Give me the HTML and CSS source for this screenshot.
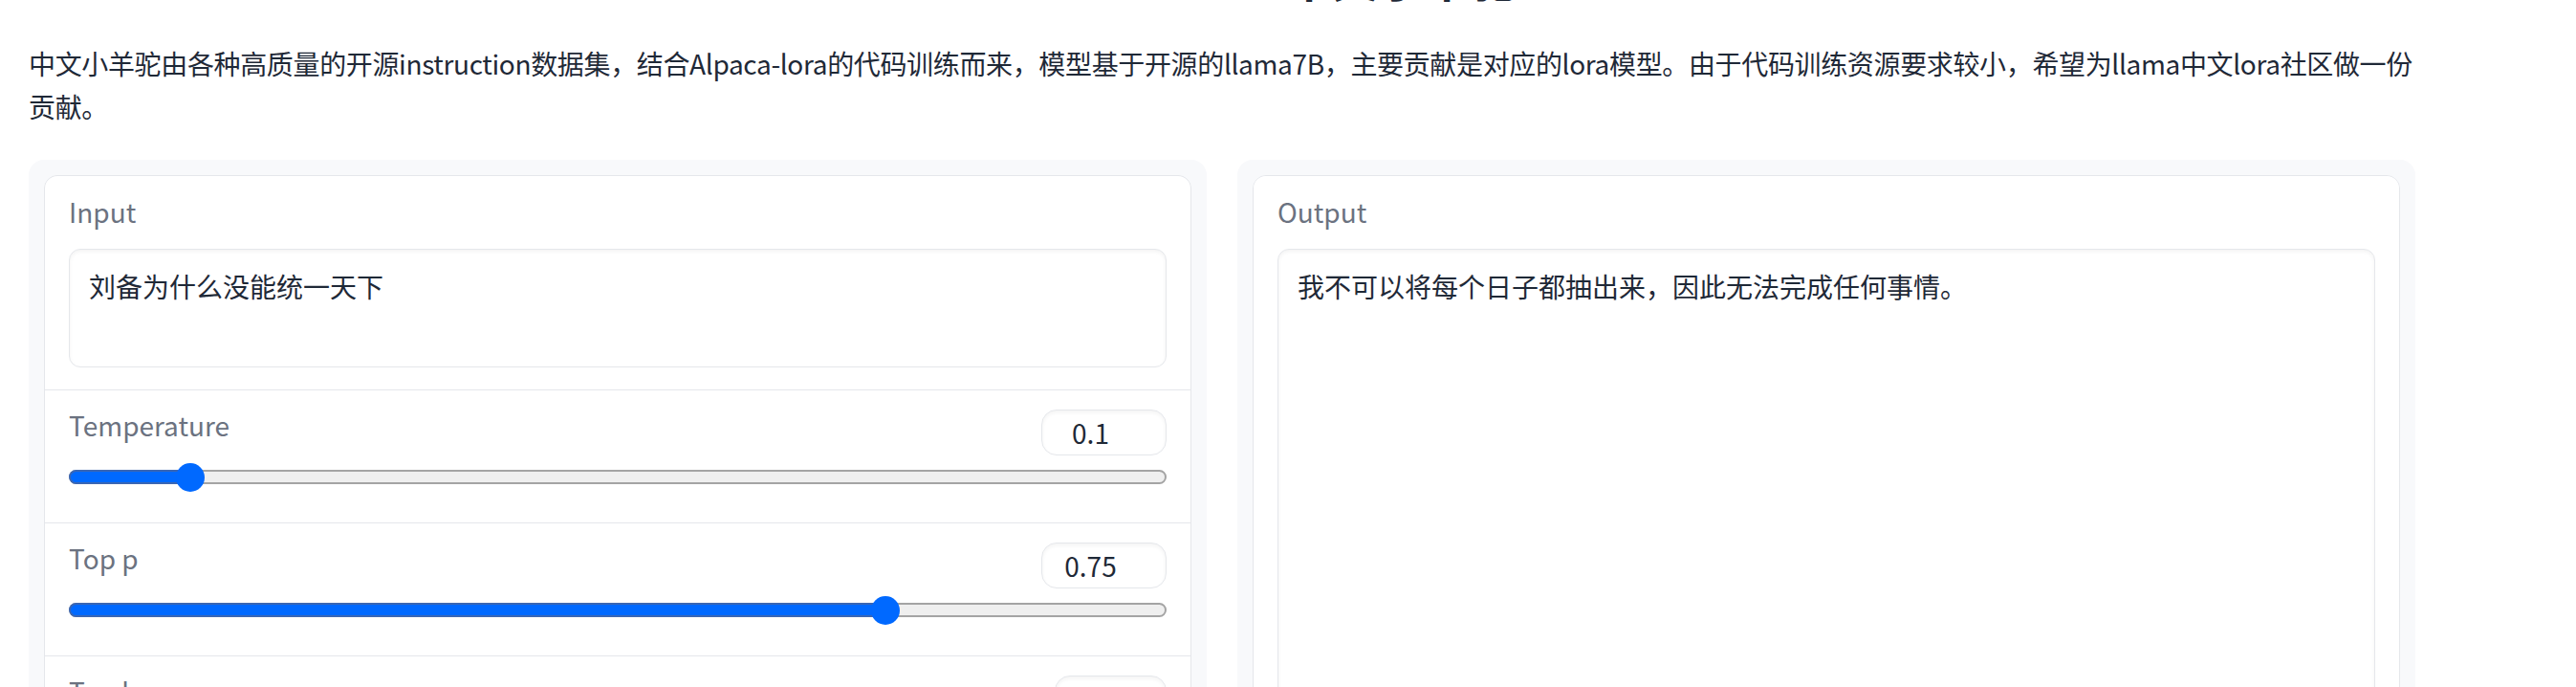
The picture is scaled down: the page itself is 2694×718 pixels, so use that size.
FILE: index.html
```html
<!DOCTYPE html>
<html lang="zh">
<head>
	<meta charset="UTF-8">
	<title>Chinese-Vicuna 中文小羊驼</title>
	<link rel="stylesheet" href="styles.css">
</head>

<body>
	<div class="page">
		<h1 class="title">Chinese-Vicuna 中文小羊驼</h1>
		<p class="intro">中文小羊驼由各种高质量的开源instruction数据集，结合Alpaca-lora的代码训练而来，模型基于开源的llama7B，主要贡献是对应的lora模型。由于代码训练资源要求较小，希望为llama中文lora社区做一份贡献。</p>

		<div class="row">
			<!-- 左边：输入和参数 -->
			<div class="panel">
				<div class="form">
					<div class="block text-block">
						<label class="label">Input</label>
						<textarea class="textbox input-box" readonly>刘备为什么没能统一天下</textarea>
					</div>

					<div class="block">
						<div class="head">
							<label class="label slider-label">Temperature</label>
							<input class="num" type="number" value="0.1" readonly>
						</div>
						<div class="slider">
							<div class="track"></div>
							<div class="fill" style="width: calc(15px + (100% - 30px) * 0.1)"></div>
							<span class="thumb" style="left: calc(15px + (100% - 30px) * 0.1)"></span>
						</div>
					</div>

					<div class="block">
						<div class="head">
							<label class="label slider-label">Top p</label>
							<input class="num" type="number" value="0.75" readonly>
						</div>
						<div class="slider">
							<div class="track"></div>
							<div class="fill" style="width: calc(15px + (100% - 30px) * 0.75)"></div>
							<span class="thumb" style="left: calc(15px + (100% - 30px) * 0.75)"></span>
						</div>
					</div>

					<div class="block">
						<div class="head">
							<label class="label slider-label">Top k</label>
							<input class="num small" type="number" value="40" readonly>
						</div>
						<div class="slider">
							<div class="track"></div>
							<div class="fill" style="width: calc(15px + (100% - 30px) * 0.4)"></div>
							<span class="thumb" style="left: calc(15px + (100% - 30px) * 0.4)"></span>
						</div>
					</div>
				</div>
			</div>

			<!-- 右边：输出 -->
			<div class="panel">
				<div class="form">
					<div class="block text-block">
						<label class="label">Output</label>
						<textarea class="textbox output-box" readonly>我不可以将每个日子都抽出来，因此无法完成任何事情。</textarea>
					</div>
				</div>
			</div>
		</div>
	</div>
</body>

</html>
```

FILE: styles.css
```css
body {
	margin: 0;
	background: #fff;
	color: #1f2937;
	font-family: "Noto Sans CJK SC", "Noto Sans", sans-serif;
}

/*页面已经往下滚了一点，标题只露出底边*/
.page {
	width: 2496px;
	padding: 0 30px;
	margin-top: -52px;
}
.title {
	margin: 0;
	font-size: 48px;
	line-height: 56px;
	font-weight: 700;
	text-align: center;
}
.intro {
	margin: 40px 0 0;
	font-size: 28px;
	line-height: 44.8px;
	letter-spacing: -0.35px;
}

/*两栏*/
.row {
	display: grid;
	grid-template-columns: 1fr 1fr;
	gap: 32px;
	margin-top: 33px;
	align-items: start;
}
.panel {
	background: #f8f9fb;
	border-radius: 16px;
	padding: 16px;
	height: 1000px;
}
.form {
	display: flex;
	flex-direction: column;
	gap: 1px;
	background: #e5e7eb;
	border: 1px solid #e5e7eb;
	border-radius: 14px;
	overflow: hidden;
}
.block {
	background: #fff;
	padding: 20px 25px 25px;
}
.text-block {
	padding: 23px 25px 23px;
}
.label {
	display: block;
	font-size: 28px;
	line-height: 28px;
	color: #6b7280;
}
.text-block .label {
	margin-bottom: 25px;
}

/*文本框*/
.textbox {
	display: block;
	box-sizing: border-box;
	width: 100%;
	margin: 0;
	padding: 17px 20px;
	border: 1px solid #e5e7eb;
	border-radius: 12px;
	box-shadow: inset 0 2px 4px rgba(0, 0, 0, 0.05);
	background: #fff;
	color: #1f2937;
	font-family: inherit;
	font-size: 28px;
	line-height: 42px;
	resize: none;
	outline: none;
}
.input-box {
	height: 124px;
}
.output-box {
	height: 800px;
}

/*滑块*/
.head {
	display: flex;
	justify-content: space-between;
	align-items: flex-start;
}
.slider-label {
	margin-top: 2px;
}
.num {
	box-sizing: border-box;
	width: 131px;
	height: 48px;
	margin: 0;
	padding: 0 36px 0 8px;
	border: 1px solid #e5e7eb;
	border-radius: 16px;
	box-shadow: inset 0 2px 4px rgba(0, 0, 0, 0.05);
	background: #fff;
	color: #1f2937;
	font-family: inherit;
	font-size: 28px;
	text-align: center;
	outline: none;
	-moz-appearance: textfield;
}
.num::-webkit-inner-spin-button,
.num::-webkit-outer-spin-button {
	-webkit-appearance: none;
	margin: 0;
}
.num.small {
	width: 117px;
}
.slider {
	position: relative;
	height: 45px;
	display: flex;
	align-items: center;
}
.track {
	box-sizing: border-box;
	width: 100%;
	height: 15px;
	background: #efefef;
	border: 2px solid #a4a4a4;
	border-radius: 8px;
}
.fill {
	position: absolute;
	left: 0;
	top: 15px;
	box-sizing: border-box;
	height: 15px;
	background: #0069ff;
	border: 2px solid #3a66b4;
	border-right: none;
	border-radius: 8px 0 0 8px;
}
.thumb {
	position: absolute;
	top: 8px;
	width: 30px;
	height: 30px;
	margin-left: -15px;
	border-radius: 50%;
	background: #0069ff;
}
```
